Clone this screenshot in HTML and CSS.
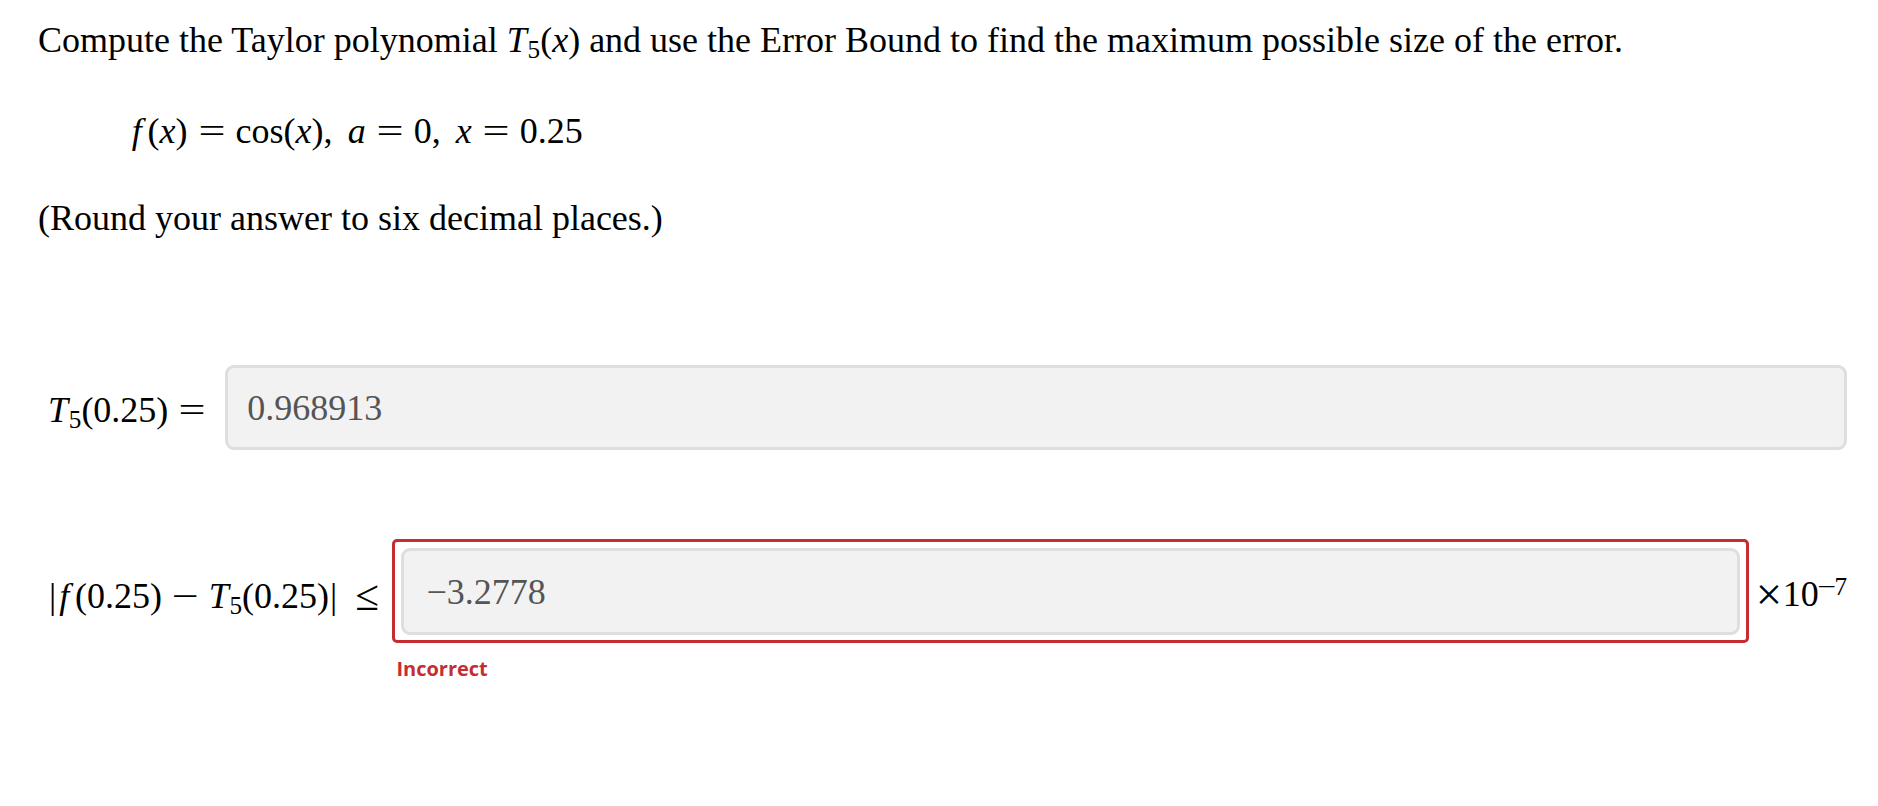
FILE: index.html
```html
<!DOCTYPE html>
<html>
<head>
<meta charset="utf-8">
<link rel="stylesheet" href="styles.css">
</head>
<body>
<p class="q">Compute the Taylor polynomial <span class="m"><i>T</i><sub>5</sub>(<i>x</i>)</span> and use the Error Bound to find the maximum possible size of the error.</p>
<p class="formula"><i class="fi">f</i>(<i>x</i>)<span class="op rel sx">=</span>cos(<i>x</i>),<span class="sp"></span><i>a</i><span class="op rel sx">=</span>0,<span class="sp"></span><i>x</i><span class="op rel sx">=</span>0.25</p>
<p class="note">(Round your answer to six decimal places.)</p>

<div class="row row1">
  <div class="label label1"><i>T</i><sub>5</sub>(0.25)<span class="op rel sx">=</span></div>
  <div class="input input1">0.968913</div>
</div>

<div class="row row2">
  <div class="label label2"><span class="bar">|</span><i class="fi">f</i>(0.25)<span class="op bin sx">−</span><i>T</i><sub>5</sub>(0.25)<span class="bar">|</span><span class="op le">≤</span></div>
  <div class="field">
    <div class="boxrow">
      <div class="wrong"><div class="input input2">−3.2778</div></div>
      <div class="unit"><span class="op times">×</span>10<sup><span class="op sup-op sx">−</span>7</sup></div>
    </div>
    <div class="feedback">Incorrect</div>
  </div>
</div>
</body>
</html>
```
FILE: styles.css
```css
body {
  margin: 0;
  padding: 20px 31px 0 38px;
  font-family: "Liberation Serif", "Times New Roman", serif;
  color: #000;
  background: #fff;
}

p { margin: 0; }

.q {
  font-size: 36px;
  line-height: 40px;
}

i { font-style: italic; }

.fi {
  margin-left: 0.05em;
  margin-right: 0.16em;
}

sub {
  font-size: 0.7em;
  vertical-align: -0.22em;
  line-height: 0;
  margin-left: 0.03em;
}

/* math operators: MathJax-like wide glyph boxes */
.op {
  display: inline-block;
  width: 0.778em;
  text-align: center;
}

.sx { transform: scaleX(1.33); }

.rel { margin: 0 0.278em; }
.bin { margin: 0 0.26em; }

.le {
  margin-left: 0.42em;
  margin-right: 0.22em;
  transform: scale(1.2);
}

.times {
  transform: scale(1.3);
}

.sp { display: inline-block; width: 0.42em; }

.formula {
  margin-top: 51px;
  padding-left: 92px;
  font-size: 36px;
  line-height: 40px;
}

.note {
  margin-top: 47px;
  font-size: 36px;
  line-height: 40px;
}

.row {
  display: flex;
  padding-left: 10px;
}

.row1 {
  margin-top: 127px;
  align-items: center;
}

.row2 {
  margin-top: 89px;
  align-items: flex-start;
}

.label {
  font-size: 36px;
  line-height: 40px;
  white-space: nowrap;
}

.label1 {
  padding-top: 5px;
  margin-right: 9px;
}

.label2 {
  margin-top: 37px;
  margin-right: 3px;
}

.bar { margin: 0 0.03em; }

.input {
  box-sizing: border-box;
  border: 3px solid #dedede;
  border-radius: 9px;
  background: #f2f2f2;
  padding-left: 19px;
  display: flex;
  align-items: center;
  font-size: 36px;
  line-height: 40px;
  color: #555;
}

.input1 {
  flex: 1;
  height: 85px;
}

.input2 {
  height: 87px;
  padding-left: 22px;
}

.field {
  flex: 1;
  display: flex;
  flex-direction: column;
}

.boxrow {
  display: flex;
  align-items: center;
}

.wrong {
  flex: 1;
  border: 3px solid #c42d32;
  border-radius: 5px;
  padding: 6px 6px 5px;
}

.unit {
  margin-left: 6px;
  padding-top: 6px;
  font-size: 36px;
  line-height: 40px;
  white-space: nowrap;
}

.unit sup {
  font-size: 0.7em;
  vertical-align: 0.44em;
  line-height: 0;
}

.sup-op { width: 0.62em; }

.feedback {
  margin-top: 12px;
  padding-left: 4px;
  font-family: "Open Sans", "Liberation Sans", sans-serif;
  font-weight: 700;
  font-size: 20px;
  line-height: 28px;
  color: #c42d32;
}
```
